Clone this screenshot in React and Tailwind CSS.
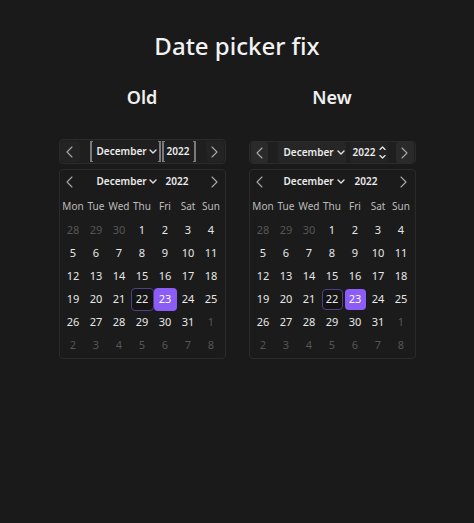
import React from "react";

const FONT = { fontFamily: '"Noto Sans", "Open Sans", sans-serif' };

function ChevLeft({ c = "#a8a8a8" }) {
  return (
    <svg width="7" height="12" viewBox="0 0 7 12" fill="none">
      <polyline points="6,1 1,6 6,11" stroke={c} strokeWidth="1.1" strokeLinecap="round" strokeLinejoin="round" />
    </svg>
  );
}
function ChevRight({ c = "#a8a8a8" }) {
  return (
    <svg width="7" height="12" viewBox="0 0 7 12" fill="none">
      <polyline points="1,1 6,6 1,11" stroke={c} strokeWidth="1.1" strokeLinecap="round" strokeLinejoin="round" />
    </svg>
  );
}
function ChevDown() {
  return (
    <svg width="8" height="5" viewBox="0 0 8 5" fill="none">
      <polyline points="1,1 4,4 7,1" stroke="#e0e0e0" strokeWidth="1.4" strokeLinecap="round" strokeLinejoin="round" />
    </svg>
  );
}
function Spinner() {
  return (
    <div className="flex flex-col items-center gap-[5px]">
      <svg width="7" height="4" viewBox="0 0 7 4" fill="none">
        <polyline points="1,3.5 3.5,1 6,3.5" stroke="#e6e6e6" strokeWidth="1.3" strokeLinecap="round" strokeLinejoin="round" />
      </svg>
      <svg width="7" height="4" viewBox="0 0 7 4" fill="none">
        <polyline points="1,0.5 3.5,3 6,0.5" stroke="#e6e6e6" strokeWidth="1.3" strokeLinecap="round" strokeLinejoin="round" />
      </svg>
    </div>
  );
}
function BrL() {
  return <span className="block w-[3px] h-[21px] border-l-2 border-t border-b border-[#7a7a7a]" />;
}
function BrR() {
  return <span className="block w-[3px] h-[21px] border-r-2 border-t border-b border-[#7a7a7a]" />;
}

const rows = [
  [[28, 1], [29, 1], [30, 1], [1], [2], [3], [4]],
  [[5], [6], [7], [8], [9], [10], [11]],
  [[12], [13], [14], [15], [16], [17], [18]],
  [[19], [20], [21], [22, 0, "today"], [23, 0, "sel"], [24], [25]],
  [[26], [27], [28], [29], [30], [31], [1, 1]],
  [[2, 1], [3, 1], [4, 1], [5, 1], [6, 1], [7, 1], [8, 1]],
];
const names = ["Mon", "Tue", "Wed", "Thu", "Fri", "Sat", "Sun"];

function Calendar({ fresh }) {
  return (
    <div className="mt-[5px] w-[167px] border border-[#2b2b2b] rounded-[4px] bg-[#1b1b1b] px-[2px] pb-[1px]">
      <div className="flex items-center h-[23px]">
        <div className="w-[16px] flex justify-center">
          <ChevLeft />
        </div>
        <div className={`flex items-center ${fresh ? "ml-[16px]" : "ml-[19px]"}`}>
          <span className={`text-[10px] font-semibold text-[#ececec] ${fresh ? "w-[51px]" : "w-[50px]"}`}>December</span>
          <span className="ml-[2px] flex"><ChevDown /></span>
          <span className={`${fresh ? "ml-[10px]" : "ml-[9px]"} text-[10px] font-semibold text-[#ececec]`}>2022</span>
        </div>
        <div className="flex-1" />
        <div className={`w-[16px] flex justify-center ${fresh ? "mr-[1px]" : ""}`}>
          <ChevRight />
        </div>
      </div>
      <div className="grid grid-cols-[repeat(7,23px)]">
        {names.map((n) => (
          <div key={n} className="h-[26px] flex items-center justify-center text-[10px] text-[#bdbdbd]">
            {n}
          </div>
        ))}
        {rows.flat().map(([d, muted, kind], i) => {
          const base = "flex items-center justify-center text-[11px] rounded-[4px]";
          let cls = muted ? "text-[#565656]" : "text-[#e8e8e8]";
          if (kind === "sel") cls = "bg-[#8b5cf6] text-white";
          if (kind === "today") cls = "border border-[#4d4088] bg-[#141414] text-[#e8e8e8]";
          return (
            <div key={i} className="h-[23px] flex items-center justify-center">
              <div className={`${base} ${cls} ${fresh ? "w-[21px] h-[21px]" : "w-[23px] h-[23px]"}`}>{d}</div>
            </div>
          );
        })}
      </div>
    </div>
  );
}

function OldToolbar() {
  return (
    <div className="w-[167px] h-[25px] border border-[#2b2b2b] rounded-[4px] bg-[#1f1f1f] flex items-center">
      <div className="w-[20px] h-[21px] flex items-center justify-center bg-[#232323] rounded-[3px]">
        <ChevLeft />
      </div>
      <div className="ml-[10px]"><BrL /></div>
      <span className="ml-[4px] text-[10px] font-semibold text-[#ececec] w-[50px]">December</span>
      <span className="ml-[2px] flex"><ChevDown /></span>
      <span className="ml-[1px]"><BrR /></span>
      <span className="ml-[1px]"><BrL /></span>
      <span className="ml-[2px] text-[10px] font-semibold text-[#ececec] w-[24px]">2022</span>
      <span className="ml-[2px]"><BrR /></span>
      <div className="flex-1" />
      <div className="w-[18px] h-[21px] mr-[1px] flex items-center justify-center bg-[#232323] rounded-[3px]">
        <ChevRight />
      </div>
    </div>
  );
}

function NewToolbar() {
  return (
    <div className="mt-[2px] w-[167px] h-[23px] border border-[#2b2b2b] rounded-[4px] bg-[#1f1f1f] flex items-center">
      <div className="ml-[1px] w-[17px] h-[21px] flex items-center justify-center bg-[#2a2a2a] rounded-[3px]">
        <ChevLeft />
      </div>
      <div className="ml-[10px] w-[68px] h-[21px] bg-[#262626] rounded-[3px] flex items-center pl-[6px]">
        <span className="text-[10px] font-semibold text-[#ececec] w-[51px]">December</span>
        <span className="ml-[2px] flex"><ChevDown /></span>
      </div>
      <div className="ml-[4px] w-[38px] h-[21px] bg-[#232323] rounded-[3px] flex items-center pl-[3px]">
        <span className="text-[10px] font-semibold text-[#ececec] w-[24px]">2022</span>
        <span className="ml-[2px]"><Spinner /></span>
      </div>
      <div className="flex-1" />
      <div className="mr-[1px] w-[18px] h-[21px] flex items-center justify-center bg-[#2a2a2a] rounded-[3px]">
        <ChevRight />
      </div>
    </div>
  );
}

export default function App() {
  return (
    <div className="w-[474px] h-[523px] bg-[#1a1a1a] pt-[30px]" style={FONT}>
      <div className="h-[32px] leading-[32px] text-center text-[24px] font-medium text-[#f2f2f2]">Date picker fix</div>
      <div className="mt-[23px] flex justify-center gap-[23px]">
        <div className="flex flex-col items-center">
          <div className="h-[24px] leading-[24px] text-[18px] font-semibold text-[#f0f0f0]">Old</div>
          <div className="mt-[30px]">
            <OldToolbar />
            <Calendar fresh={false} />
          </div>
        </div>
        <div className="flex flex-col items-center">
          <div className="h-[24px] leading-[24px] text-[18px] font-semibold text-[#f0f0f0]">New</div>
          <div className="mt-[30px]">
            <NewToolbar />
            <div className="mt-[1px]"><Calendar fresh={true} /></div>
          </div>
        </div>
      </div>
    </div>
  );
}
